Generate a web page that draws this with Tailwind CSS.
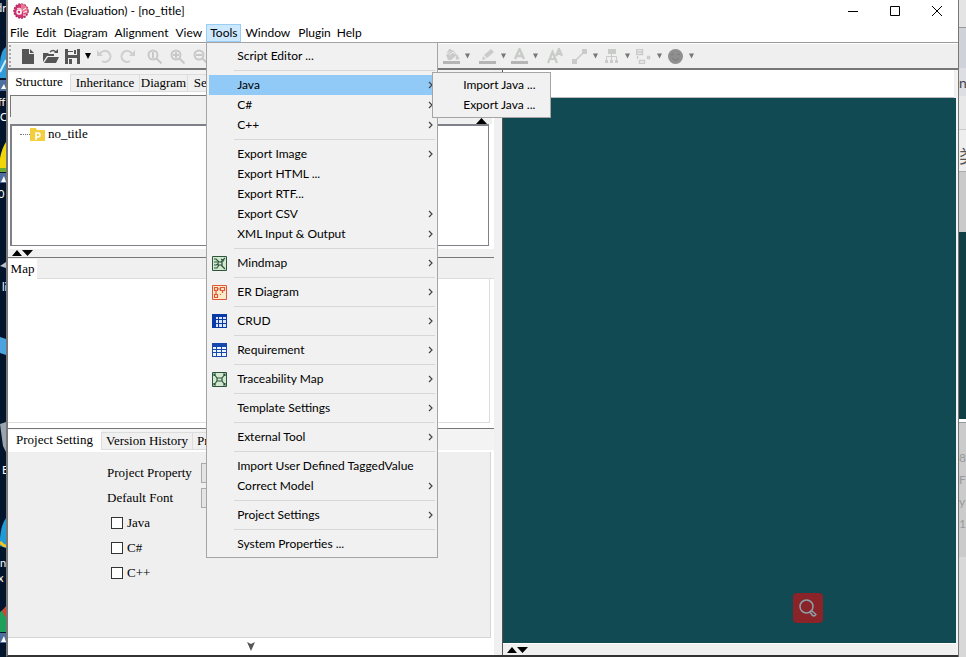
<!DOCTYPE html>
<html lang="en">
<head>
  <meta charset="UTF-8">
  <meta name="viewport" content="width=device-width, initial-scale=1.0">
  <title>Astah (Evaluation) - [no_title]</title>
  <script src="https://cdn.jsdelivr.net/npm/@tailwindcss/browser@4"></script>
</head>
<body class="h-screen flex overflow-hidden bg-[#03152c] text-black text-[12px] leading-5 font-['Lato','Noto_Sans',sans-serif]">

  <!-- Shared icons -->
  <svg class="hidden">
    <symbol id="down" viewBox="0 0 6 6"><path d="M0 0h6L3 6z"/></symbol>
    <symbol id="next" viewBox="0 0 5 8"><path d="M1 1l3 3-3 3" fill="none" stroke="#444" stroke-width="1.2"/></symbol>
    <symbol id="split" viewBox="0 0 20 6"><path d="M0 6l5-6 5 6zM10 0h11l-5.500 6z"/></symbol>
  </svg>

  <!-- Desktop, left -->
  <div class="relative w-[6px] shrink-0 overflow-hidden">
    <svg width="6" height="657" viewBox="0 0 6 657">
      <path d="M6 47Q1 50 0 62v16h6z" fill="#2f9bd8"/>
      <path d="M0 72L6 60" stroke="#cfeaf8" stroke-width="2"/>
      <path d="M0 80h6v11H0z" fill="#4e6f9d"/><path d="M1 89l3-5 2 5z" fill="#fff"/>
      <path d="M6 142Q2 148 0 158v14h6z" fill="#f2d60c"/>
      <path d="M0 168h6v4H0z" fill="#6cab32"/>
      <path d="M0 173h6v10H0z" fill="#4e6f9d"/><path d="M1 182l3-6 2 6z" fill="#fff"/>
      <path d="M0 266l6-4v6z" fill="#b9c2cc"/>
      <path d="M0 337l6 2v16l-6-2z" fill="#4ba3e0"/>
      <path d="M0 424l6-2v30L3 446z" fill="#9aa4ae"/>
      <path d="M6 518Q1 525 0 538v8l6 2z" fill="#1f9bd8"/><path d="M0 542q3 4 6 4" stroke="#f3c520" stroke-width="3" fill="none"/>
      <path d="M0 612l6-5v25H0z" fill="#1ea05c"/><path d="M2 611l4-5v12z" fill="#d9412f"/>
      <path d="M0 633h6v10H0z" fill="#4e6f9d"/><path d="M1 642l3-6 2 6z" fill="#fff"/>
    </svg>
    <div class="absolute inset-0 text-[11px] leading-4 text-white whitespace-nowrap">
      <span class="absolute top-0 -left-1">dr</span>
      <span class="absolute top-[94px] -left-0.5">ff</span>
      <span class="absolute top-[109px] left-0">C</span>
      <span class="absolute top-[186px] -left-0.5">0</span>
      <span class="absolute top-[279px] left-0.5">li</span>
      <span class="absolute top-[462px] left-0.5">E</span>
      <span class="absolute top-[555px] left-0">n</span>
      <span class="absolute top-[570px] -left-0.5">x</span>
    </div>
  </div>

  <!-- Application window -->
  <div class="flex-1 min-w-0 flex flex-col bg-white border-l-2 border-b-2 border-l-[#777] border-b-[#333]">

    <!-- Title bar -->
    <header class="h-[22px] shrink-0 flex items-center pl-[5px]">
      <svg class="mr-1" width="16" height="16" viewBox="0 0 16 16">
        <circle cx="8" cy="8" r="7" fill="#cf3570" stroke="#b02a62" stroke-width="1.500" stroke-dasharray="2 1"/>
        <path d="M8 1a7 7 0 0 1 6 10L8 8z" fill="#e8788f"/>
        <circle cx="6" cy="9" r="2" fill="none" stroke="#fff" stroke-width="1.300"/>
        <path d="M4 6q4-2 4 1v4.500M10 10l4-2M10 7l3-2M10 12h3" fill="none" stroke="#fff"/>
      </svg>
      <h1>Astah (Evaluation) - [no_title]</h1>
      <div class="ml-auto flex">
        <button aria-label="Minimize" class="w-[42px] h-5 grid place-items-center"><svg width="10" height="10"><path d="M0 5.500h10" stroke="#000"/></svg></button>
        <button aria-label="Maximize" class="w-[42px] h-5 grid place-items-center"><svg width="10" height="10"><path d="M.5.5h9v9h-9z" fill="none" stroke="#000"/></svg></button>
        <button aria-label="Close" class="w-[42px] h-5 grid place-items-center"><svg width="10" height="10"><path d="M0 0l10 10M10 0L0 10" stroke="#000"/></svg></button>
      </div>
    </header>

    <!-- Menu bar -->
    <nav class="h-[21px] pt-[1px] shrink-0 flex border-b border-[#999] leading-5">
      <button class="px-[2px] mr-[3px]">File</button>
      <button class="px-[2px] mr-[3px]">Edit</button>
      <button class="px-[2px] mr-[3px]">Diagram</button>
      <button class="px-[2px] mr-[3px]">Alignment</button>
      <button class="px-[2px] mr-0.5">View</button>
      <div class="relative">
        <button class="h-[18px] mt-[1px] px-[3px] border border-[#99cdf5] bg-[#cce8ff] leading-4">Tools</button>
        <div class="absolute z-10 left-0 top-[19px] w-[232px] pt-[3px] pb-[3px] pl-[2px] pr-[2px] bg-[#f1f1f1] border border-[#a5a5a5] leading-5">
          <ul class="[&_button]:flex [&_button]:items-center [&_button]:w-full [&_button]:h-5 [&_button]:text-left [&_button]:pr-[2px] [&_hr]:my-1 [&_hr]:ml-[25px] [&_hr]:border-[#d7d7d7] [&_i]:w-[28px] [&_i]:pl-[3px] [&_i]:shrink-0 [&_span]:flex-1">
            <li><button><i></i><span>Script Editor ...</span></button><hr></li>
            <li class="relative">
              <button class="bg-[#91c9f7]"><i></i><span>Java</span><svg width="5" height="8"><use href="#next"/></svg></button>
              <ul class="absolute z-20 left-[223px] -top-[3px] w-[119px] py-[2px] bg-[#f1f1f1] border border-[#a5a5a5]">
                <li><button><i></i><span class="pl-[2px] whitespace-nowrap">Import Java ...</span></button></li>
                <li><button><i></i><span class="pl-[2px] whitespace-nowrap">Export Java ...</span></button></li>
              </ul>
            </li>
            <li><button><i></i><span>C#</span><svg width="5" height="8"><use href="#next"/></svg></button></li>
            <li><button><i></i><span>C++</span><svg width="5" height="8"><use href="#next"/></svg></button><hr></li>
            <li><button><i></i><span>Export Image</span><svg width="5" height="8"><use href="#next"/></svg></button></li>
            <li><button><i></i><span>Export HTML ...</span></button></li>
            <li><button><i></i><span>Export RTF...</span></button></li>
            <li><button><i></i><span>Export CSV</span><svg width="5" height="8"><use href="#next"/></svg></button></li>
            <li><button><i></i><span>XML Input &amp; Output</span><svg width="5" height="8"><use href="#next"/></svg></button><hr></li>
            <li><button><i><svg width="15" height="15" viewBox="0 0 15 15"><path d="M.5.5h14v14H.5z" fill="#d3e8cc" stroke="#2c5540"/><path d="M6 6h4v3H6zM2 3h2l3 3M2 6h3M2 9h2l2-1M2 12h3l2-3M9 6l4-4M9 9l4 4M9 3l3 2" fill="none" stroke="#2c5540" stroke-width="1.200"/></svg></i><span>Mindmap</span><svg width="5" height="8"><use href="#next"/></svg></button><hr></li>
            <li><button><i><svg width="15" height="15" viewBox="0 0 15 15"><path d="M.5.5h14v14H.5z" fill="#fbecc9" stroke="#e0563a"/><path d="M2.500 2.500h3v3h-3zM8.500 2.500h4v3h-4zM2.500 9.500h3v3h-3zM6 4h2M4 6v3M10.500 6v2M8 9.500h1" fill="none" stroke="#e0563a" stroke-width="1.200"/></svg></i><span>ER Diagram</span><svg width="5" height="8"><use href="#next"/></svg></button><hr></li>
            <li><button><i><svg width="15" height="14" viewBox="0 0 15 14"><path d="M0 0h15v14H0z" fill="#0a3aa5"/><path d="M4 3h2v2H4zM7 3h3v2H7zM11 3h3v2h-3zM4 6h2v3H4zM7 6h3v3H7zM11 6h3v3h-3zM4 10h2v3H4zM7 10h3v3H7zM11 10h3v3h-3z" fill="#dbe5fa"/></svg></i><span>CRUD</span><svg width="5" height="8"><use href="#next"/></svg></button><hr></li>
            <li><button><i><svg width="15" height="14" viewBox="0 0 15 14"><path d="M0 0h15v14H0z" fill="#1649ae"/><path d="M1 4h3v2H1zM5 4h4v2H5zM10 4h4v2h-4zM1 7h3v2H1zM5 7h4v2H5zM10 7h4v2h-4zM1 10h3v3H1zM5 10h4v3H5zM10 10h4v3h-4z" fill="#eef3fc"/></svg></i><span>Requirement</span><svg width="5" height="8"><use href="#next"/></svg></button><hr></li>
            <li><button><i><svg width="15" height="15" viewBox="0 0 15 15"><path d="M.5.5h14v14H.5z" fill="#d3e8cc" stroke="#2c5540"/><path d="M5 6h5v3H5zM2 2l3 4M13 2l-3 4M2 13l3-4M13 13l-3-4M2 4V2h2M11 2h2v2M2 11v2h2M11 13h2v-2" fill="none" stroke="#2c5540" stroke-width="1.200"/></svg></i><span>Traceability Map</span><svg width="5" height="8"><use href="#next"/></svg></button><hr></li>
            <li><button><i></i><span>Template Settings</span><svg width="5" height="8"><use href="#next"/></svg></button><hr></li>
            <li><button><i></i><span>External Tool</span><svg width="5" height="8"><use href="#next"/></svg></button><hr></li>
            <li><button><i></i><span class="whitespace-nowrap">Import User Defined TaggedValue</span></button></li>
            <li><button><i></i><span>Correct Model</span><svg width="5" height="8"><use href="#next"/></svg></button><hr></li>
            <li><button><i></i><span>Project Settings</span><svg width="5" height="8"><use href="#next"/></svg></button><hr></li>
            <li><button><i></i><span>System Properties ...</span></button></li>
          </ul>
        </div>
      </div>
      <button class="px-[2px] mx-0.5">Window</button>
      <button class="px-[2px] mx-0.5">Plugin</button>
      <button class="px-[2px]">Help</button>
    </nav>

    <!-- Toolbar -->
    <div class="h-[27px] shrink-0 flex items-center bg-[#efefef] border-t border-t-white border-b-2 border-b-[#777] [&_button]:h-5 [&_button]:grid [&_button]:place-items-center [&_button]:shrink-0">
      <svg class="ml-[1px] mr-[5px]" width="2" height="22"><path d="M1 0v22" stroke="#aaa" stroke-width="2" stroke-dasharray="2 2"/></svg>
      <button aria-label="New" class="w-[23px]"><svg width="12" height="15" viewBox="0 0 12 15" fill="#555"><path d="M0 0h7v5h5v10H0zM8 0l4 4H8z"/></svg></button>
      <button aria-label="Open" class="w-[23px]"><svg width="16" height="14" viewBox="0 0 16 14" fill="#555"><path d="M0 13V4h5l1 1h5v2H4zM5 8h11l-3 6H1z"/><path d="M7 3q3-3 6 0" fill="none" stroke="#555" stroke-width="1.500"/><path d="M11 4h4V0z"/></svg></button>
      <button aria-label="Save" class="w-[21px]"><svg width="15" height="15" viewBox="0 0 15 15"><path d="M0 0h15v15H0z" fill="#555"/><path d="M3 0h9v6H3zM3 9h9v6H3z" fill="#efefef"/><path d="M9 1h2v4H9zM4 10h3v5H4zM3 2h5v1H3zM3 7h9v1H3z" fill="#555"/></svg></button>
      <button aria-label="Save options" class="w-[10px]"><svg width="6" height="6"><use href="#down"/></svg></button>
      <button aria-label="Undo" class="w-[23px]"><svg width="15" height="14" viewBox="0 0 15 14"><path d="M3 5a5.500 5.500 0 1 1 2 7" fill="none" stroke="#cfcfcf" stroke-width="2"/><path d="M0 1v6h6z" fill="#cfcfcf"/></svg></button>
      <button aria-label="Redo" class="w-[23px]"><svg width="15" height="14" viewBox="0 0 15 14"><path d="M12 5a5.500 5.500 0 1 0-2 7" fill="none" stroke="#cfcfcf" stroke-width="2"/><path d="M15 1v6H9z" fill="#cfcfcf"/></svg></button>
      <button aria-label="Actual size" class="w-[23px] ml-1"><svg width="15" height="15" viewBox="0 0 15 15" fill="none" stroke="#c8c8c8" stroke-width="2"><circle cx="6" cy="6" r="4.500"/><path d="M9.500 9.500l5 5M6 3v6M5 4h1"/></svg></button>
      <button aria-label="Zoom in" class="w-[23px]"><svg width="15" height="15" viewBox="0 0 15 15" fill="none" stroke="#c8c8c8" stroke-width="2"><circle cx="6" cy="6" r="4.500"/><path d="M9.500 9.500l5 5M6 3v6M3 6h6"/></svg></button>
      <button aria-label="Zoom out" class="w-[23px]"><svg width="15" height="15" viewBox="0 0 15 15" fill="none" stroke="#c8c8c8" stroke-width="2"><circle cx="6" cy="6" r="4.500"/><path d="M9.500 9.500l5 5M3 6h6"/></svg></button>
      <div class="ml-[229px] flex items-center fill-[#777]">
        <button aria-label="Fill color" class="w-5"><svg width="17" height="16" viewBox="0 0 17 16" fill="#c8cbc8"><path d="M0 13h17v3H0z" fill="#b5b5b5"/><path d="M3 7l7-5 4 5-6 5H5z"/><path d="M4 5l3-4 2 2M14 7l2 4h-3z" stroke="#c8cbc8"/><path d="M6 7l4-3 2 2" stroke="#eee" fill="none"/></svg></button>
        <button aria-label="Fill options" class="w-3"><svg width="5" height="6"><use href="#down"/></svg></button>
        <button aria-label="Line color" class="w-5 ml-1"><svg width="17" height="16" viewBox="0 0 17 16" fill="#c8cbc8"><path d="M0 13h17v3H0z" fill="#b5b5b5"/><path d="M3 12l1-4 3 3zM5 7l7-6 3 3-7 6z"/></svg></button>
        <button aria-label="Line color options" class="w-3"><svg width="5" height="6"><use href="#down"/></svg></button>
        <button aria-label="Font color" class="w-5"><svg width="17" height="16" viewBox="0 0 17 16"><path d="M0 13h17v3H0z" fill="#b5b5b5"/><path d="M4 11L8.500 1 13 11M5.500 8h6" fill="none" stroke="#c8cbc8" stroke-width="2.400"/></svg></button>
        <button aria-label="Font color options" class="w-3"><svg width="5" height="6"><use href="#down"/></svg></button>
        <button aria-label="Font size" class="w-5 ml-1 mr-1"><svg width="16" height="16" viewBox="0 0 16 16" fill="none" stroke="#c8cbc8" stroke-width="2.200"><path d="M1 15L5.500 4 10 15M3 11h6M9 8l3-7 3 7M10 6h4"/></svg></button>
        <button aria-label="Line style" class="w-5"><svg width="15" height="15" viewBox="0 0 15 15" fill="#c8cbc8"><path d="M0 10h5v5H0zM10 0h5v5h-5z"/><path d="M3 12l9-9" stroke="#c8cbc8" stroke-width="1.500"/></svg></button>
        <button aria-label="Line style options" class="w-3"><svg width="5" height="6"><use href="#down"/></svg></button>
        <button aria-label="Tree layout" class="w-5"><svg width="13" height="14" viewBox="0 0 13 14" fill="#c8cbc8"><path d="M3 0h8v5H3zM0 11h3v3H0zM5 11h3v3H5zM10 11h3v3h-3z"/><path d="M6.500 5v6M1.500 11V7.500h10V11" fill="none" stroke="#c8cbc8"/></svg></button>
        <button aria-label="Tree layout options" class="w-3"><svg width="5" height="6"><use href="#down"/></svg></button>
        <button aria-label="Align" class="w-5"><svg width="15" height="15" viewBox="0 0 15 15" fill="none" stroke="#c8cbc8"><path d="M.5.5h6v5h-6zM.5 3h6M3.500 11.500h5v3h-5zM11.500 7.500h2v2h-2zM1.500 7v3" stroke-width="1.400"/></svg></button>
        <button aria-label="Align options" class="w-3"><svg width="5" height="6"><use href="#down"/></svg></button>
        <button aria-label="Icons" class="w-5"><svg width="15" height="15" viewBox="0 0 15 15"><circle cx="7.500" cy="7.500" r="7.500" fill="#8f8f8f"/><path d="M3 6q1.500-2 3 0M9 6q1.500-2 3 0M4 9q3.500 4 7 0" fill="none" stroke="#7a7a7a"/></svg></button>
        <button aria-label="Icons options" class="w-3"><svg width="5" height="6"><use href="#down"/></svg></button>
      </div>
    </div>

    <div class="flex-1 min-h-0 flex bg-[#f0f0f0]">
      <!-- Left panes -->
      <div class="w-[486px] shrink-0 flex flex-col bg-white font-['Liberation_Serif',serif] text-[13px]">
        <section class="flex flex-col">
          <div class="h-[22px] flex items-end bg-[#f3f3f3] pt-[2px] [&_button]:whitespace-nowrap">
            <button class="w-[62px] h-5 bg-white leading-5">Structure</button>
            <button class="w-[70px] h-[18px] border border-[#ddd] bg-[#f0f0f0] leading-4">Inheritance</button>
            <button class="w-[48px] h-[18px] border border-l-0 border-[#ddd] bg-[#f0f0f0] leading-4">Diagram</button>
            <button class="w-[48px] h-[18px] border border-l-0 border-[#ddd] bg-[#f0f0f0] leading-4">Search</button>
          </div>
          <div class="mt-[3px] mx-[2px] h-[22px] bg-[#f0f0f0] border-l border-t border-[#777]"></div>
          <div class="mx-[2px] h-[7px] bg-[#f0f0f0] flex justify-end items-center pr-[5px]"><svg width="11" height="6" viewBox="0 0 11 6"><path d="M0 6l5.500-6L11 6z"/></svg></div>
          <div class="ml-[2px] mr-[5px] h-[122px] border-2 border-r border-b border-[#7f8188] flex items-start pl-[8px]">
            <span class="w-[10px] mt-[8px] border-t border-dotted border-[#777]"></span>
            <svg class="mt-[2px] mr-[3px]" width="15" height="13" viewBox="0 0 15 13"><path d="M0 0h6l1 2h8v11H0z" fill="#f3cf3f"/><path d="M6 12V5h2a2 2 0 0 1 0 4H6" fill="none" stroke="#fff" stroke-width="1.600"/></svg>
            <span class="leading-4">no_title</span>
          </div>
          <div class="mt-[3px] h-[9px] flex items-center bg-[#f0f0f0] border-b border-[#777] pl-[3px]"><svg width="22" height="6"><use href="#split"/></svg></div>
        </section>

        <section class="flex-1 min-h-0 flex flex-col">
          <div class="h-[21px] pt-[1px] flex bg-[#f0f0f0] border-b border-[#ddd]"><button class="w-[29px] h-5 bg-white leading-5">Map</button></div>
          <div class="flex-1 mr-[4px] border-r border-b border-[#ddd]"></div>
          <div class="h-[6px] border-b border-[#777]"></div>
        </section>

        <section class="flex flex-col">
          <div class="h-[21px] flex items-end bg-[#f3f3f3] [&_button]:whitespace-nowrap">
            <button class="w-[93px] h-[20px] bg-white leading-5">Project Setting</button>
            <button class="w-[92px] h-[18px] border border-[#ddd] bg-[#f0f0f0] leading-4">Version History</button>
            <button class="w-[62px] h-[18px] border border-l-0 border-[#ddd] bg-[#f0f0f0] leading-4 pl-1 text-left">Property</button>
          </div>
          <div class="mt-[2px] mr-[3px] h-[186px] pt-[8px] pl-[99px] bg-[#efefef] border-r border-b border-[#d5d5d5] [&_label]:whitespace-nowrap">
            <div class="h-[25px] flex items-center"><label for="property" class="w-[94px]">Project Property</label><input id="property" class="w-40 h-5 border border-[#aaa] bg-[#e4e4e4]"></div>
            <div class="h-[25px] flex items-center"><label for="font" class="w-[94px]">Default Font</label><input id="font" class="w-40 h-5 border border-[#aaa] bg-[#e4e4e4]"></div>
            <label class="h-[25px] flex items-center gap-1 pl-1"><input type="checkbox" class="appearance-none size-3 bg-white border border-[#333]">Java</label>
            <label class="h-[25px] flex items-center gap-1 pl-1"><input type="checkbox" class="appearance-none size-3 bg-white border border-[#333]">C#</label>
            <label class="h-[25px] flex items-center gap-1 pl-1"><input type="checkbox" class="appearance-none size-3 bg-white border border-[#333]">C++</label>
          </div>
          <button aria-label="More" class="h-[17px] grid place-items-center"><svg width="8" height="9" viewBox="0 0 8 9"><path d="M0 0l4 2 4-2-4 9z" fill="#555"/></svg></button>
        </section>
      </div>

      <!-- Editor area -->
      <main class="ml-2 flex-1 min-w-0 flex flex-col border-l border-[#555] border-r-2 border-r-[#f4f4f4]">
        <div class="h-[28px] mr-[2px] bg-white border-b border-[#bbb] shrink-0"></div>
        <div class="relative flex-1 bg-[#114a52]">
          <button aria-label="Search" class="absolute right-[133px] bottom-5 size-[30px] rounded bg-[#8a2429] grid place-items-center">
            <svg width="18" height="18" viewBox="0 0 18 18" fill="none" stroke="#8ba0a8" stroke-width="1.500"><circle cx="7.500" cy="7.500" r="6.500"/><path d="M11 13l1.500-1.500 4.500 4-1.500 1.500-2-.5z"/></svg>
          </button>
        </div>
        <div class="h-3 shrink-0 flex items-center pl-[3px] bg-[#f0f0f0] border-t border-white"><svg width="22" height="6"><use href="#split"/></svg></div>
      </main>
    </div>
  </div>

  <!-- Desktop, right -->
  <div class="relative w-[8px] shrink-0 overflow-hidden flex flex-col bg-[#d2d2d2] border-l border-[#777] text-[#999]">
    <div class="h-[28px] bg-[#e4e4e4] border-b border-[#999]"></div>
    <div class="h-[40px] bg-[#cfd2d8]"></div>
    <div class="h-[28px] bg-[#dcdee3] text-[#444] text-[14px] leading-[30px]">ne</div>
    <div class="h-[34px] bg-[#e8e8e8] border-b border-[#ccc]"></div>
    <div class="h-[42px] bg-[#eee] border-b border-[#aaa] text-[#555] text-[18px] leading-[50px] font-['Noto_Sans_CJK_SC',sans-serif]">类</div>
    <div class="h-[60px] bg-[#cacaca]"></div>
    <div class="h-[187px] bg-[#103f46]"></div>
    <div class="h-1 bg-white border-b border-[#999]"></div>
    <div class="h-[134px] pt-6 bg-[#cbcbcb] text-[12px] leading-[22px]">82<br>F<br>y9<br>10</div>
    <div class="flex-1 bg-[#d8d8d8]"></div>
  </div>
</body>
</html>
